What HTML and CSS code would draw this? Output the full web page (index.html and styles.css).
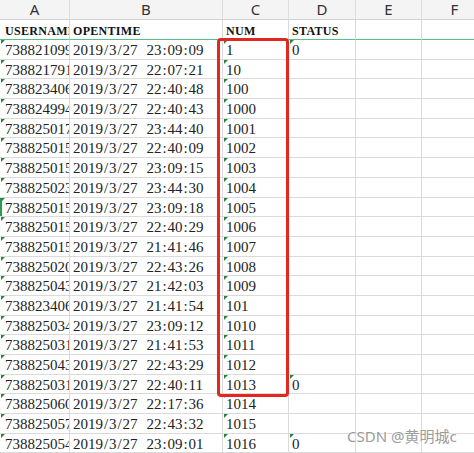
FILE: index.html
```html
<!DOCTYPE html>
<html>
<head>
<meta charset="utf-8">
<link rel="stylesheet" href="styles.css">
</head>
<body>
<div class="sheet">
  <div class="row hdr"><div class="c">A</div><div class="c">B</div><div class="c">C</div><div class="c">D</div><div class="c">E</div><div class="c">F</div></div>
  <div class="row title"><div class="c">USERNAME</div><div class="c">OPENTIME</div><div class="c">NUM</div><div class="c">STATUS</div><div class="c"></div><div class="c"></div></div>
  <div class="row"><div class="c t">7388210992</div><div class="c dt">2019<i>/</i>3<i>/</i>27<i class="g"></i>23<i>:</i>09<i>:</i>09</div><div class="c t">1</div><div class="c t">0</div><div class="c"></div><div class="c"></div></div>
  <div class="row"><div class="c t">7388217912</div><div class="c dt">2019<i>/</i>3<i>/</i>27<i class="g"></i>22<i>:</i>07<i>:</i>21</div><div class="c t">10</div><div class="c"></div><div class="c"></div><div class="c"></div></div>
  <div class="row"><div class="c t">7388234062</div><div class="c dt">2019<i>/</i>3<i>/</i>27<i class="g"></i>22<i>:</i>40<i>:</i>48</div><div class="c t">100</div><div class="c"></div><div class="c"></div><div class="c"></div></div>
  <div class="row"><div class="c t">7388249942</div><div class="c dt">2019<i>/</i>3<i>/</i>27<i class="g"></i>22<i>:</i>40<i>:</i>43</div><div class="c t">1000</div><div class="c"></div><div class="c"></div><div class="c"></div></div>
  <div class="row"><div class="c t">7388250172</div><div class="c dt">2019<i>/</i>3<i>/</i>27<i class="g"></i>23<i>:</i>44<i>:</i>40</div><div class="c t">1001</div><div class="c"></div><div class="c"></div><div class="c"></div></div>
  <div class="row"><div class="c t">7388250152</div><div class="c dt">2019<i>/</i>3<i>/</i>27<i class="g"></i>22<i>:</i>40<i>:</i>09</div><div class="c t">1002</div><div class="c"></div><div class="c"></div><div class="c"></div></div>
  <div class="row"><div class="c t">7388250153</div><div class="c dt">2019<i>/</i>3<i>/</i>27<i class="g"></i>23<i>:</i>09<i>:</i>15</div><div class="c t">1003</div><div class="c"></div><div class="c"></div><div class="c"></div></div>
  <div class="row"><div class="c t">7388250232</div><div class="c dt">2019<i>/</i>3<i>/</i>27<i class="g"></i>23<i>:</i>44<i>:</i>30</div><div class="c t">1004</div><div class="c"></div><div class="c"></div><div class="c"></div></div>
  <div class="row"><div class="c t sel">7388250153</div><div class="c dt">2019<i>/</i>3<i>/</i>27<i class="g"></i>23<i>:</i>09<i>:</i>18</div><div class="c t">1005</div><div class="c"></div><div class="c"></div><div class="c"></div></div>
  <div class="row"><div class="c t">7388250153</div><div class="c dt">2019<i>/</i>3<i>/</i>27<i class="g"></i>22<i>:</i>40<i>:</i>29</div><div class="c t">1006</div><div class="c"></div><div class="c"></div><div class="c"></div></div>
  <div class="row"><div class="c t">7388250153</div><div class="c dt">2019<i>/</i>3<i>/</i>27<i class="g"></i>21<i>:</i>41<i>:</i>46</div><div class="c t">1007</div><div class="c"></div><div class="c"></div><div class="c"></div></div>
  <div class="row"><div class="c t">7388250202</div><div class="c dt">2019<i>/</i>3<i>/</i>27<i class="g"></i>22<i>:</i>43<i>:</i>26</div><div class="c t">1008</div><div class="c"></div><div class="c"></div><div class="c"></div></div>
  <div class="row"><div class="c t">7388250432</div><div class="c dt">2019<i>/</i>3<i>/</i>27<i class="g"></i>21<i>:</i>42<i>:</i>03</div><div class="c t">1009</div><div class="c"></div><div class="c"></div><div class="c"></div></div>
  <div class="row"><div class="c t">7388234062</div><div class="c dt">2019<i>/</i>3<i>/</i>27<i class="g"></i>21<i>:</i>41<i>:</i>54</div><div class="c t">101</div><div class="c"></div><div class="c"></div><div class="c"></div></div>
  <div class="row"><div class="c t">7388250342</div><div class="c dt">2019<i>/</i>3<i>/</i>27<i class="g"></i>23<i>:</i>09<i>:</i>12</div><div class="c t">1010</div><div class="c"></div><div class="c"></div><div class="c"></div></div>
  <div class="row"><div class="c t">7388250312</div><div class="c dt">2019<i>/</i>3<i>/</i>27<i class="g"></i>21<i>:</i>41<i>:</i>53</div><div class="c t">1011</div><div class="c"></div><div class="c"></div><div class="c"></div></div>
  <div class="row"><div class="c t">7388250432</div><div class="c dt">2019<i>/</i>3<i>/</i>27<i class="g"></i>22<i>:</i>43<i>:</i>29</div><div class="c t">1012</div><div class="c"></div><div class="c"></div><div class="c"></div></div>
  <div class="row"><div class="c t">7388250312</div><div class="c dt">2019<i>/</i>3<i>/</i>27<i class="g"></i>22<i>:</i>40<i>:</i>11</div><div class="c t">1013</div><div class="c t">0</div><div class="c"></div><div class="c"></div></div>
  <div class="row"><div class="c t">7388250602</div><div class="c dt">2019<i>/</i>3<i>/</i>27<i class="g"></i>22<i>:</i>17<i>:</i>36</div><div class="c t">1014</div><div class="c"></div><div class="c"></div><div class="c"></div></div>
  <div class="row"><div class="c t">7388250572</div><div class="c dt">2019<i>/</i>3<i>/</i>27<i class="g"></i>22<i>:</i>43<i>:</i>32</div><div class="c t">1015</div><div class="c"></div><div class="c"></div><div class="c"></div></div>
  <div class="row"><div class="c t">7388250542</div><div class="c dt">2019<i>/</i>3<i>/</i>27<i class="g"></i>23<i>:</i>09<i>:</i>01</div><div class="c t">1016</div><div class="c t">0</div><div class="c"></div><div class="c"></div></div>
  <div class="highlight"></div>
  <div class="watermark">CSDN @黄明城c</div>
</div>
</body>
</html>
```
FILE: styles.css
```css
* { box-sizing: border-box; }
html, body { margin: 0; padding: 0; background: #fff; overflow: hidden; }
body { width: 474px; height: 453px; }

.sheet {
  position: relative;
  width: 488px;
  font-family: "Liberation Serif", "Times New Roman", serif;
  color: #222;
}

.row {
  display: grid;
  grid-template-columns: 70px 153px 66px 67px 66px 66px;
  height: 19.7px;
}

.c {
  position: relative;
  overflow: hidden;
  white-space: nowrap;
  border-right: 1px solid #dadada;
  border-bottom: 1px solid #dadada;
  padding: 1px 0 0 3px;
  font-size: 15px;
  line-height: 19px;
}

.c:first-child { padding-left: 5px; }

.hdr { height: 20px; }
.hdr .c {
  background: #f4f4f4;
  border-bottom-color: #d2d2d2;
  border-right-color: #dcdcdc;
  text-align: center;
  font-family: "Noto Sans", "Liberation Sans", sans-serif;
  font-size: 15px;
  line-height: 18px;
  padding: 0;
  color: #333;
}

.title { height: 20px; }
.title .c {
  font-weight: bold;
  font-size: 12px;
  letter-spacing: 0.3px;
  padding-top: 2px;
  padding-left: 3px;
  border-bottom: 1px solid #59c08a;
  color: #111;
}
.title .c:first-child { padding-left: 5px; }

.dt { padding-left: 3px; }
.dt i {
  display: inline-block;
  width: 6px;
  text-align: center;
  font-style: normal;
}
.dt i.g { width: 9px; }

.t::before {
  content: "";
  position: absolute;
  left: 1px;
  top: 0;
  border-top: 4px solid #23853c;
  border-right: 4px solid transparent;
}

.sel { box-shadow: inset 2px 0 0 #2f9a55; }

.highlight {
  position: absolute;
  left: 217px;
  top: 38px;
  width: 72px;
  height: 359px;
  border: 3px solid #e3261f;
  border-radius: 4px;
}

.watermark {
  position: absolute;
  left: 347px;
  top: 426px;
  font-family: "Noto Sans", "Noto Sans CJK SC", sans-serif;
  font-size: 15px;
  line-height: 20px;
  color: #9c9c9c;
  text-shadow: 0 0 2px #fff, 0 0 2px #fff;
  white-space: nowrap;
}
```
